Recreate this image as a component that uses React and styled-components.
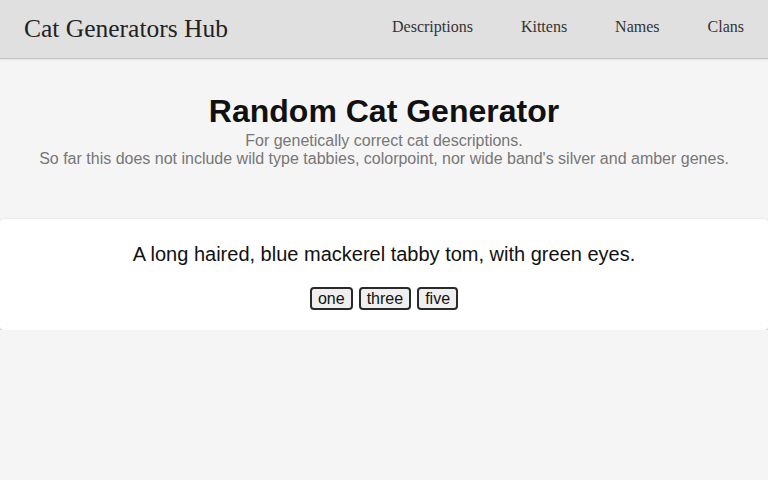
import React from "react";
import styled, { createGlobalStyle } from "styled-components";

const Global = createGlobalStyle`
  html, body { margin: 0; padding: 0; background: #f5f5f5; }
  body { font-family: "Liberation Sans", Arial, sans-serif; }
`;

const Header = styled.header`
  height: 58px;
  background: #e0e0e0;
  border-bottom: 1px solid #c4c4c4;
  box-shadow: 0 1px 2px rgba(0,0,0,0.08);
  display: flex;
  align-items: center;
  justify-content: space-between;
  padding-left: 24px;
  box-sizing: content-box;
`;

const Brand = styled.div`
  font-family: "Liberation Serif", "Times New Roman", serif;
  font-size: 25.5px;
  color: #222;
`;

const Nav = styled.nav`
  display: flex;
  align-self: flex-start;
  padding-top: 17px;
`;

const NavLink = styled.a`
  font-family: "Liberation Serif", "Times New Roman", serif;
  font-size: 16px;
  color: #333;
  padding: 0 24px;
  text-decoration: none;
  line-height: 20px;
`;

const Intro = styled.section`
  text-align: center;
  padding-top: 34px;
  padding-bottom: 51px;
`;

const Title = styled.h1`
  margin: 0 0 2px;
  font-size: 32px;
  font-weight: bold;
  color: #111;
  line-height: 37px;
`;

const Sub = styled.p`
  margin: 0;
  font-size: 16px;
  line-height: 18px;
  color: #777;
`;

const Card = styled.section`
  background: #fff;
  border-radius: 4px;
  box-shadow: 0 1px 3px rgba(0,0,0,0.25);
  padding: 24px 0 20px;
  text-align: center;
`;

const Description = styled.p`
  margin: 0 0 21px;
  font-size: 20px;
  line-height: 23px;
  color: #111;
`;

const Buttons = styled.div`
  display: flex;
  justify-content: center;
  gap: 6px;
`;

const Btn = styled.button`
  font-family: "Liberation Sans", Arial, sans-serif;
  font-size: 16px;
  line-height: 19px;
  padding: 0 6px;
  height: 23px;
  background: #efefef;
  border: 2px solid #2a2a2a;
  border-radius: 4px;
  color: #111;
`;

export default function App() {
  return (
    <>
      <Global />
      <Header>
        <Brand>Cat Generators Hub</Brand>
        <Nav>
          <NavLink>Descriptions</NavLink>
          <NavLink>Kittens</NavLink>
          <NavLink>Names</NavLink>
          <NavLink>Clans</NavLink>
        </Nav>
      </Header>
      <Intro>
        <Title>Random Cat Generator</Title>
        <Sub>For genetically correct cat descriptions.</Sub>
        <Sub>So far this does not include wild type tabbies, colorpoint, nor wide band's silver and amber genes.</Sub>
      </Intro>
      <Card>
        <Description>A long haired, blue mackerel tabby tom, with green eyes.</Description>
        <Buttons>
          <Btn>one</Btn>
          <Btn>three</Btn>
          <Btn>five</Btn>
        </Buttons>
      </Card>
    </>
  );
}
